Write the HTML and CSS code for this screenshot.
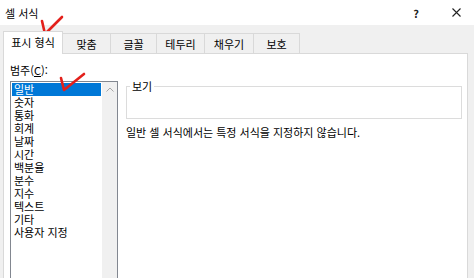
FILE: index.html
```html
<!DOCTYPE html>
<html lang="ko">
<head>
<meta charset="utf-8">
<title>셀 서식</title>
<link rel="stylesheet" href="styles.css">
</head>
<body>
<div class="window">
  <header class="titlebar">
    <span class="title">셀 서식</span>
    <span class="tb-btns">
      <span class="help">?</span>
      <svg class="close" width="9" height="9" viewBox="0 0 9 9"><path d="M0.5 0.5 L8.5 8.5 M8.5 0.5 L0.5 8.5" stroke="#222" stroke-width="1.1" fill="none"/></svg>
    </span>
  </header>
  <div class="dialog">
    <nav class="tabs">
      <div class="tab active w1">표시 형식</div>
      <div class="tab w2">맞춤</div>
      <div class="tab w3">글꼴</div>
      <div class="tab w4">테두리</div>
      <div class="tab w5">채우기</div>
      <div class="tab w6">보호</div>
    </nav>
    <section class="panel">
      <div class="category">
        <div class="label">범주(<u>C</u>):</div>
        <div class="listbox">
          <ul class="items">
            <li class="sel">일반</li>
            <li>숫자</li>
            <li>통화</li>
            <li>회계</li>
            <li>날짜</li>
            <li>시간</li>
            <li>백분율</li>
            <li>분수</li>
            <li>지수</li>
            <li>텍스트</li>
            <li>기타</li>
            <li>사용자 지정</li>
          </ul>
          <div class="scrollbar">
            <div class="sb-btn">
              <svg width="8" height="5" viewBox="0 0 8 5"><path d="M0.5 4.5 L4 1 L7.5 4.5" stroke="#a6a6a6" stroke-width="1" fill="none"/></svg>
            </div>
          </div>
        </div>
      </div>
      <div class="detail">
        <div class="sample"><span class="sample-title">보기</span></div>
        <p class="desc">일반 셀 서식에서는 특정 서식을 지정하지 않습니다.</p>
      </div>
    </section>
  </div>
  <svg class="marks" width="474" height="278" viewBox="0 0 474 278">
    <path d="M42 21 L45 34 L62 17" />
    <path d="M61 78 L64 90 L84 74" />
  </svg>
</div>
</body>
</html>
```
FILE: styles.css
```css
html, body {
  margin: 0;
  padding: 0;
}
body {
  width: 474px;
  height: 278px;
  overflow: hidden;
  background: #f0f0f0;
  font-family: "Noto Sans CJK KR", "Noto Sans", sans-serif;
  font-size: 11px;
  color: #000;
}
.window {
  position: relative;
  width: 474px;
  height: 278px;
  overflow: hidden;
}
.titlebar {
  height: 25px;
  background: #fff;
  display: flex;
  align-items: center;
  justify-content: space-between;
  padding: 0 13px 0 5px;
  box-sizing: border-box;
}
.title {
  line-height: 14px;
}
.tb-btns {
  display: flex;
  align-items: center;
  gap: 33px;
}
.help {
  font-size: 11px;
  line-height: 12px;
  font-weight: bold;
  color: #222;
}
.close {
  display: block;
}
.dialog {
  padding: 8px 6px 0 3px;
}
.tabs {
  display: flex;
  align-items: flex-end;
  height: 20px;
}
.tab {
  box-sizing: border-box;
  height: 20px;
  border: 1px solid #d9d9d9;
  border-bottom: none;
  border-left: none;
  background: #f0f0f0;
  display: flex;
  align-items: center;
  justify-content: center;
  line-height: 14px;
}
.tab.active {
  height: 23px;
  margin-bottom: -1px;
  background: #fff;
  border-left: 1px solid #d9d9d9;
  position: relative;
  z-index: 1;
  padding-bottom: 2px;
}
.w1 { width: 60px; }
.w2 { width: 48px; }
.w3 { width: 46px; }
.w4 { width: 48px; }
.w5 { width: 49px; }
.w6 { width: 46px; }
.panel {
  background: #fff;
  border: 1px solid #d9d9d9;
  border-bottom: none;
  height: 225px;
  display: flex;
  gap: 8px;
  padding: 8px 5px 0 6px;
  box-sizing: border-box;
}
.category {
  width: 108px;
  flex: none;
}
.label {
  line-height: 16px;
  margin-bottom: 3px;
}
.listbox {
  box-sizing: border-box;
  width: 108px;
  height: 197px;
  border: 1px solid #828790;
  border-bottom: none;
  display: flex;
}
.items {
  flex: 1;
  list-style: none;
  margin: 0;
  padding: 1px;
}
.items li {
  height: 13px;
  line-height: 13px;
  padding-left: 2px;
  white-space: nowrap;
}
.items li.sel {
  background: #0078d7;
  color: #fff;
}
.scrollbar {
  width: 15px;
  background: #f0f0f0;
  flex: none;
}
.sb-btn {
  height: 15px;
  display: flex;
  align-items: center;
  justify-content: center;
}
.sb-btn svg {
  display: block;
}
.detail {
  flex: 1;
}
.sample {
  margin-top: 24px;
  height: 33px;
  box-sizing: border-box;
  border: 1px solid #dcdcdc;
}
.sample-title {
  display: inline-block;
  vertical-align: top;
  margin: -8px 0 0 3px;
  padding: 0 2px;
  background: #fff;
  line-height: 14px;
}
.desc {
  margin: 5px 0 0 0;
  line-height: 16px;
  white-space: nowrap;
}
.marks {
  position: absolute;
  top: 0;
  left: 0;
  pointer-events: none;
}
.marks path {
  fill: none;
  stroke: #e3201b;
  stroke-width: 2.6;
  stroke-linecap: round;
  stroke-linejoin: round;
}
```
